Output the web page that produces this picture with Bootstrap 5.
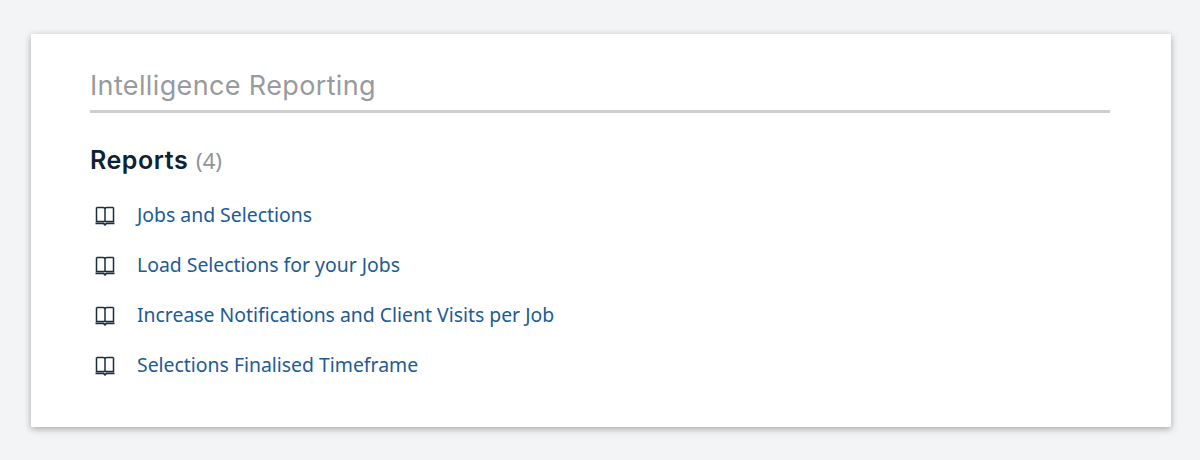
<!DOCTYPE html>
<html lang="en">
<head>
<meta charset="utf-8">
<title>Intelligence Reporting</title>
<link rel="stylesheet" href="https://cdn.jsdelivr.net/npm/bootstrap@5.3.0/dist/css/bootstrap.min.css">
<style>
html,body{height:460px;overflow:hidden}
body{background:#f3f4f6;padding:34px 29px 0 31px;font-family:"Noto Sans","Open Sans",sans-serif}
.panel-box{height:393px;background:#fff;padding:33px 61px 0 59px;box-shadow:0 2px 7px rgba(0,0,0,.32);border-radius:1px}
.panel-title{font-family:Inter,"Open Sans",sans-serif;font-size:27px;font-weight:400;line-height:38px;color:#979b9f;letter-spacing:.36px;margin:0;padding-bottom:5px;border-bottom:3px solid #cdcecf}
.reports-head{font-family:Inter,"Open Sans",sans-serif;font-size:25px;font-weight:600;line-height:32px;color:#0d2233;letter-spacing:.55px;margin:31px 0 14px}
.reports-count{font-family:"Noto Sans",sans-serif;font-weight:400;font-size:22px;letter-spacing:0;color:#8f9499;margin-left:1px}
.report-row{height:50px;gap:22px}
.report-row svg{width:20px;height:20px;flex:none;margin-left:5px;margin-top:2px}
.report-row a{color:#215a96;text-decoration:none;font-size:19.4px;line-height:30px}
</style>
</head>
<body>
<main class="panel-box">
<h1 class="panel-title">Intelligence Reporting</h1>
<h2 class="reports-head">Reports <span class="reports-count">(4)</span></h2>
<div class="d-flex flex-column">
<div class="report-row d-flex align-items-center"><svg viewBox="0 0 20 20" fill="none" stroke="#1c2d3d" stroke-width="1.5"><path d="M1.500 1.500H8Q10 1.500 10 3V15.500M18.500 1.500H12Q10 1.500 10 3M1.500 1.500V15.500H18.500V1.500"/><path stroke-width="1.700" d="M.5 17.300H8.500L10 18.800L11.500 17.300H19.500"/></svg><a href="#">Jobs and Selections</a></div>
<div class="report-row d-flex align-items-center"><svg viewBox="0 0 20 20" fill="none" stroke="#1c2d3d" stroke-width="1.5"><path d="M1.500 1.500H8Q10 1.500 10 3V15.500M18.500 1.500H12Q10 1.500 10 3M1.500 1.500V15.500H18.500V1.500"/><path stroke-width="1.700" d="M.5 17.300H8.500L10 18.800L11.500 17.300H19.500"/></svg><a href="#">Load Selections for your Jobs</a></div>
<div class="report-row d-flex align-items-center"><svg viewBox="0 0 20 20" fill="none" stroke="#1c2d3d" stroke-width="1.5"><path d="M1.500 1.500H8Q10 1.500 10 3V15.500M18.500 1.500H12Q10 1.500 10 3M1.500 1.500V15.500H18.500V1.500"/><path stroke-width="1.700" d="M.5 17.300H8.500L10 18.800L11.500 17.300H19.500"/></svg><a href="#">Increase Notifications and Client Visits per Job</a></div>
<div class="report-row d-flex align-items-center"><svg viewBox="0 0 20 20" fill="none" stroke="#1c2d3d" stroke-width="1.5"><path d="M1.500 1.500H8Q10 1.500 10 3V15.500M18.500 1.500H12Q10 1.500 10 3M1.500 1.500V15.500H18.500V1.500"/><path stroke-width="1.700" d="M.5 17.300H8.500L10 18.800L11.500 17.300H19.500"/></svg><a href="#">Selections Finalised Timeframe</a></div>
</div>
</main>
<script src="https://cdn.jsdelivr.net/npm/bootstrap@5.3.0/dist/js/bootstrap.bundle.min.js"></script>
</body>
</html>
